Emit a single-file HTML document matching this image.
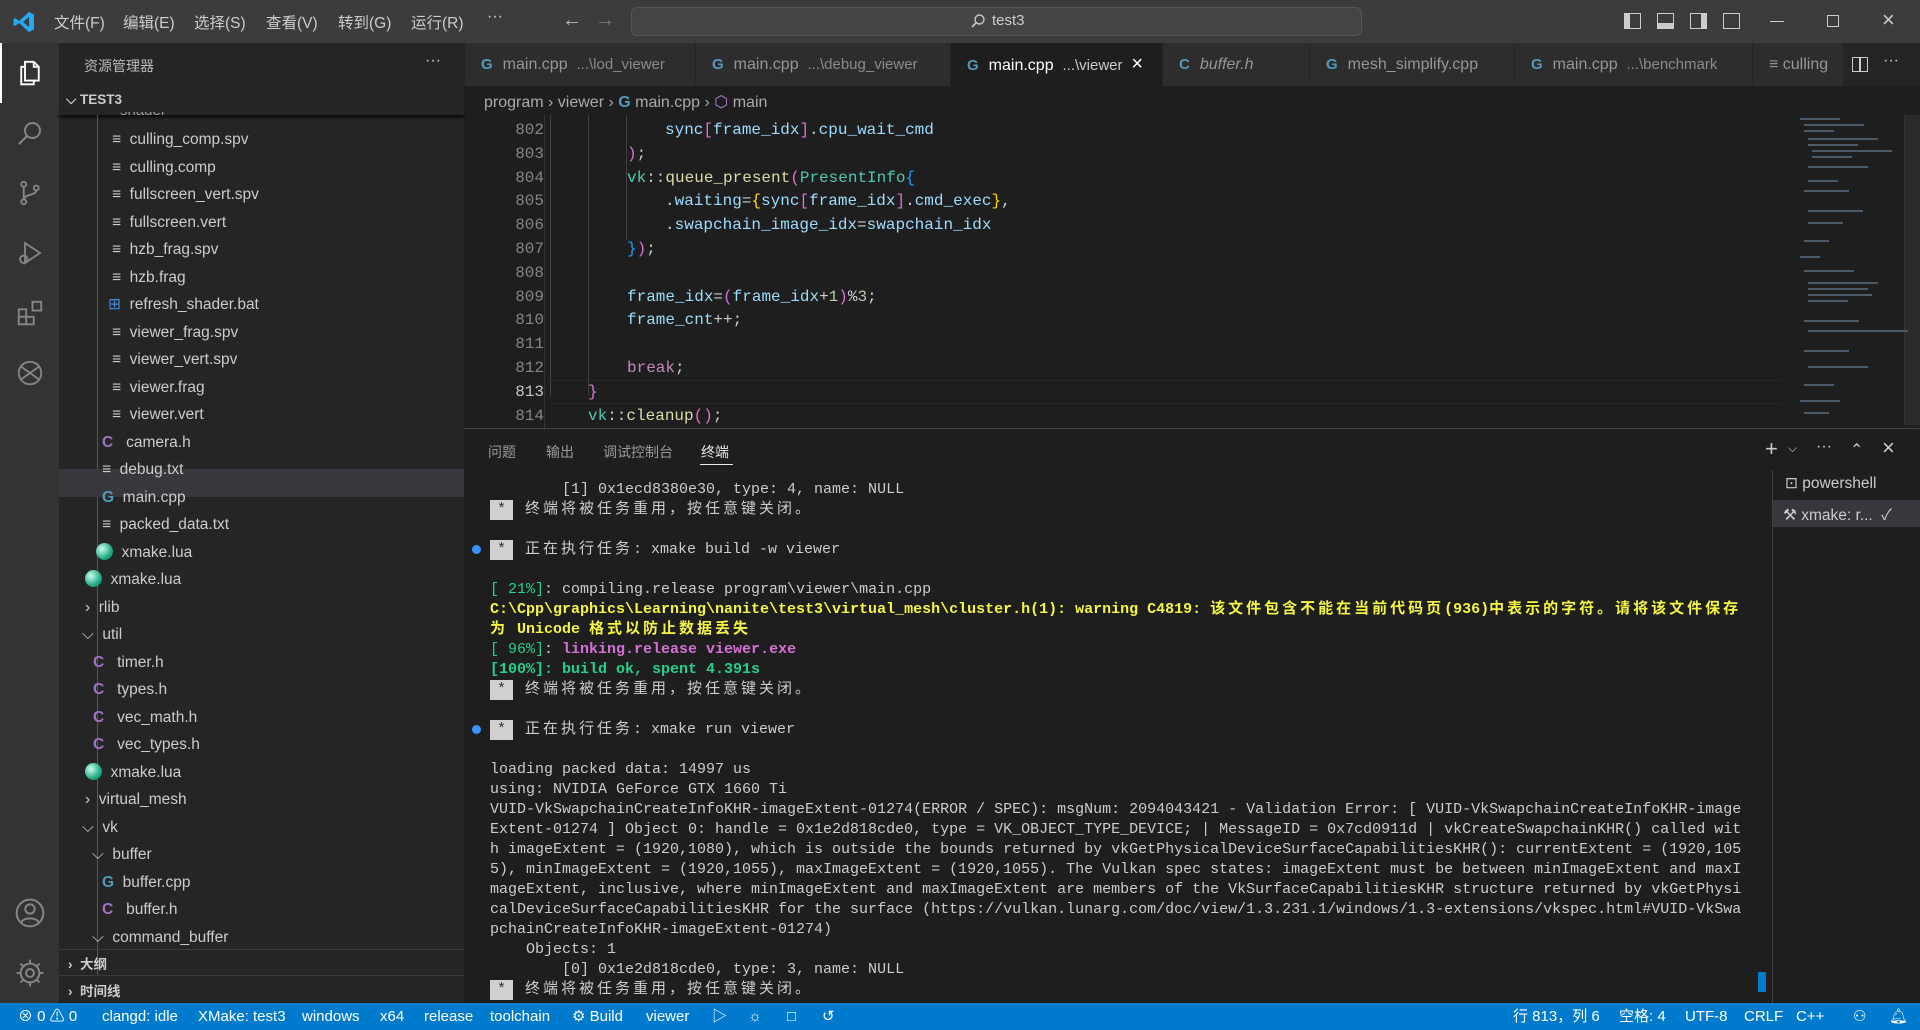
<!DOCTYPE html>
<html><head><meta charset="utf-8"><style>
*{box-sizing:border-box;margin:0;padding:0}
body{width:1920px;height:1030px;background:#1e1e1e;overflow:hidden;position:relative;font-family:"Liberation Sans","Noto Sans CJK SC",sans-serif;color:#cccccc}
.a{position:absolute;white-space:pre}
#title{left:0;top:0;width:1920px;height:43px;background:#3c3c3c}
#act{left:0;top:43px;width:59px;height:960px;background:#333333}
#side{left:59px;top:43px;width:405px;height:960px;background:#252526}
#tabs{left:464px;top:43px;width:1456px;height:43px;background:#252526}
.tab{position:absolute;top:43px;height:43px;background:#2d2d2d;border-right:1px solid #252526;color:#969696;font-size:16px;line-height:43px;padding-left:16px;white-space:pre}
.tab b{color:#519aba;font-weight:bold;margin-right:10px;font-size:15px}
.tab i{font-style:normal;color:#8b8b8b;font-size:15px}
.row{position:absolute;left:59px;width:405px;height:27.5px;line-height:27.5px;font-size:15.5px;color:#cccccc;white-space:pre}
.code{font-family:"Liberation Mono",monospace;font-size:16px;line-height:23.8px}
.ln{position:absolute;left:464px;width:80px;text-align:right;color:#858585}
.t{font-family:"Liberation Mono","Noto Sans CJK SC",monospace;font-size:15px;line-height:20px;color:#cccccc;left:490px}
.cj{letter-spacing:3px}
.box{display:inline-block;width:23px;height:20px;background:#d0d0d0;color:#333;text-align:center;vertical-align:top;margin-right:12px}
.sb{position:absolute;top:1003px;height:27px;line-height:27px;font-size:15px;color:#fff;white-space:pre}
.mm{position:absolute;height:2px;background:#4a5a6a}
</style></head><body>
<div id="title" class="a"></div>
<svg class="a" style="left:12px;top:10px" width="24" height="24" viewBox="0 0 24 24"><path d="M17 2 L22 4.5 V19.5 L17 22 L7 13 L3 16 L1.5 15 V9 L3 8 L7 11 Z M17 7 L11 12 L17 17 Z" fill="#23a9f2"/></svg>
<div class="a" style="left:54px;top:11px;font-size:15.5px;color:#cccccc">文件(F)</div>
<div class="a" style="left:123px;top:11px;font-size:15.5px">编辑(E)</div>
<div class="a" style="left:194px;top:11px;font-size:15.5px">选择(S)</div>
<div class="a" style="left:266px;top:11px;font-size:15.5px">查看(V)</div>
<div class="a" style="left:338px;top:11px;font-size:15.5px">转到(G)</div>
<div class="a" style="left:411px;top:11px;font-size:15.5px">运行(R)</div>
<div class="a" style="left:487px;top:8px;font-size:16px">···</div>
<div class="a" style="left:562px;top:9px;font-size:20px;color:#bbb">←</div>
<div class="a" style="left:595px;top:9px;font-size:20px;color:#777">→</div>
<div class="a" style="left:631px;top:7px;width:731px;height:29px;background:#444445;border:1px solid #555;border-radius:6px"></div>
<svg class="a" style="left:970px;top:13px" width="16" height="16" viewBox="0 0 16 16"><circle cx="9.5" cy="6.5" r="4.5" stroke="#ccc" fill="none" stroke-width="1.4"/><path d="M6.3 9.7 L2 14" stroke="#ccc" stroke-width="1.6"/></svg>
<div class="a" style="left:992px;top:12px;font-size:15px">test3</div>
<div class="a" style="left:1624px;top:13px;width:17px;height:16px;border:1.5px solid #ccc;border-left-width:6px"></div>
<div class="a" style="left:1657px;top:13px;width:17px;height:16px;border:1.5px solid #ccc;border-bottom-width:6px"></div>
<div class="a" style="left:1690px;top:13px;width:17px;height:16px;border:1.5px solid #ccc;border-right-width:6px"></div>
<div class="a" style="left:1723px;top:13px;width:17px;height:16px;border:1.5px solid #ccc"></div>
<div class="a" style="left:1770px;top:21px;width:14px;height:1px;background:#ccc"></div>
<div class="a" style="left:1827px;top:15px;width:12px;height:12px;border:1px solid #ccc"></div>
<div class="a" style="left:1882px;top:7px;font-size:22px;color:#ccc">×</div>

<div id="act" class="a"></div>
<div class="a" style="left:0;top:43px;width:2px;height:60px;background:#fff"></div>
<svg class="a" style="left:15px;top:58px" width="30" height="30" viewBox="0 0 24 24" fill="none" stroke="#fff" stroke-width="1.5"><path d="M8 3h7l4 4v11H8z M15 3v4h4 M8 7H5v14h10v-3"/></svg>
<svg class="a" style="left:15px;top:118px" width="30" height="30" viewBox="0 0 24 24" fill="none" stroke="#858585" stroke-width="1.6"><circle cx="14" cy="10" r="6"/><path d="M9.5 14.5 L3 21"/></svg>
<svg class="a" style="left:15px;top:178px" width="30" height="30" viewBox="0 0 24 24" fill="none" stroke="#858585" stroke-width="1.5"><circle cx="7" cy="5" r="2"/><circle cx="7" cy="19" r="2"/><circle cx="17" cy="8" r="2"/><path d="M7 7v10 M17 10c0 4-10 3-10 7"/></svg>
<svg class="a" style="left:15px;top:238px" width="30" height="30" viewBox="0 0 24 24" fill="none" stroke="#858585" stroke-width="1.5"><path d="M8 4 L20 12 L8 20 Z"/><circle cx="7" cy="17" r="3"/></svg>
<svg class="a" style="left:15px;top:298px" width="30" height="30" viewBox="0 0 24 24" fill="none" stroke="#858585" stroke-width="1.5"><path d="M3 9h6v6H3z M9 15h6v6H9z M3 15h6v6H3z M14 3h7v7h-7z"/></svg>
<svg class="a" style="left:15px;top:358px" width="30" height="30" viewBox="0 0 24 24" fill="none" stroke="#858585" stroke-width="1.5"><circle cx="12" cy="12" r="9"/><path d="M5 7l14 10 M5 17l14-10"/></svg>
<svg class="a" style="left:14px;top:897px" width="32" height="32" viewBox="0 0 24 24" fill="none" stroke="#858585" stroke-width="1.5"><circle cx="12" cy="12" r="10"/><circle cx="12" cy="9" r="3.5"/><path d="M5.5 19c2-4 11-4 13 0"/></svg>
<svg class="a" style="left:14px;top:957px" width="32" height="32" viewBox="0 0 24 24" fill="none" stroke="#858585" stroke-width="1.5"><circle cx="12" cy="12" r="3"/><path d="M12 2v3M12 19v3M2 12h3M19 12h3M4.9 4.9l2.1 2.1M17 17l2.1 2.1M4.9 19.1L7 17M17 7l2.1-2.1"/><circle cx="12" cy="12" r="7"/></svg>

<div id="side" class="a"></div>
<div class="a" style="left:84px;top:56px;font-size:14px;color:#bbbbbb">资源管理器</div>
<div class="a" style="left:425px;top:52px;font-size:16px">···</div>
<div class="a" style="left:66px;top:92px;font-size:13.5px;font-weight:bold;color:#ccc">⌵ TEST3</div>
<div class="a" style="left:120px;top:112px;width:100px;height:8px;overflow:hidden"><div style="font-size:15px;color:#999;margin-top:-10px">shader</div></div>
<div class="a" style="left:59px;top:112px;width:405px;height:3px;box-shadow:0 2px 3px #000"></div>
<div class="a" style="left:97px;top:115px;width:1px;height:860px;background:#585858"></div>
<div class="row" style="top:469px;background:#37373d"></div>
<div class="row" style="top:126px;left:112px">≡  culling_comp.spv</div>
<div class="row" style="top:154px;left:112px">≡  culling.comp</div>
<div class="row" style="top:181px;left:112px">≡  fullscreen_vert.spv</div>
<div class="row" style="top:209px;left:112px">≡  fullscreen.vert</div>
<div class="row" style="top:236px;left:112px">≡  hzb_frag.spv</div>
<div class="row" style="top:264px;left:112px">≡  hzb.frag</div>
<div class="row" style="top:291px;left:108px"><span style="color:#3e8de0">⊞</span>  refresh_shader.bat</div>
<div class="row" style="top:319px;left:112px">≡  viewer_frag.spv</div>
<div class="row" style="top:346px;left:112px">≡  viewer_vert.spv</div>
<div class="row" style="top:374px;left:112px">≡  viewer.frag</div>
<div class="row" style="top:401px;left:112px">≡  viewer.vert</div>
<div class="row" style="top:429px;left:102px"><b style="color:#a074c4">C</b>   camera.h</div>
<div class="row" style="top:456px;left:102px">≡  debug.txt</div>
<div class="row" style="top:484px;left:102px"><b style="color:#519aba">G</b>  main.cpp</div>
<div class="row" style="top:511px;left:102px">≡  packed_data.txt</div>
<div class="row" style="top:539px;left:96px"><span style="display:inline-block;width:17px;height:17px;border-radius:50%;vertical-align:-3px;background:radial-gradient(circle at 35% 35%,#cfe,#2a8 60%,#174)"></span>  xmake.lua</div>
<div class="row" style="top:566px;left:85px"><span style="display:inline-block;width:17px;height:17px;border-radius:50%;vertical-align:-3px;background:radial-gradient(circle at 35% 35%,#cfe,#2a8 60%,#174)"></span>  xmake.lua</div>
<div class="row" style="top:594px;left:85px">›  rlib</div>
<div class="row" style="top:621px;left:82px">⌵  util</div>
<div class="row" style="top:649px;left:93px"><b style="color:#a074c4">C</b>   timer.h</div>
<div class="row" style="top:676px;left:93px"><b style="color:#a074c4">C</b>   types.h</div>
<div class="row" style="top:704px;left:93px"><b style="color:#a074c4">C</b>   vec_math.h</div>
<div class="row" style="top:731px;left:93px"><b style="color:#a074c4">C</b>   vec_types.h</div>
<div class="row" style="top:759px;left:85px"><span style="display:inline-block;width:17px;height:17px;border-radius:50%;vertical-align:-3px;background:radial-gradient(circle at 35% 35%,#cfe,#2a8 60%,#174)"></span>  xmake.lua</div>
<div class="row" style="top:786px;left:85px">›  virtual_mesh</div>
<div class="row" style="top:814px;left:82px">⌵  vk</div>
<div class="row" style="top:841px;left:92px">⌵  buffer</div>
<div class="row" style="top:869px;left:102px"><b style="color:#519aba">G</b>  buffer.cpp</div>
<div class="row" style="top:896px;left:102px"><b style="color:#a074c4">C</b>   buffer.h</div>
<div class="row" style="top:924px;left:92px">⌵  command_buffer</div>
<div class="a" style="left:59px;top:949px;width:405px;height:1px;background:#3c3c3c"></div>
<div class="a" style="left:68px;top:953px;font-size:13.5px;font-weight:bold">›  大纲</div>
<div class="a" style="left:59px;top:975px;width:405px;height:1px;background:#3c3c3c"></div>
<div class="a" style="left:68px;top:980px;font-size:13.5px;font-weight:bold">›  时间线</div>

<div id="tabs" class="a"></div>
<div class="tab" style="left:465px;width:231px"><b>G</b>main.cpp  <i>...\lod_viewer</i></div>
<div class="tab" style="left:696px;width:255px"><b>G</b>main.cpp  <i>...\debug_viewer</i></div>
<div class="tab" style="left:951px;width:212px;background:#1e1e1e;color:#fff"><b>G</b>main.cpp  <i style="color:#ccc">...\viewer</i>  <span style="font-size:20px">×</span></div>
<div class="tab" style="left:1163px;width:147px"><b>C</b><span style="font-style:italic">buffer.h</span></div>
<div class="tab" style="left:1310px;width:205px"><b>G</b>mesh_simplify.cpp</div>
<div class="tab" style="left:1515px;width:238px"><b>G</b>main.cpp  <i>...\benchmark</i></div>
<div class="tab" style="left:1753px;width:100px">≡ culling</div>
<div class="a" style="left:1843px;top:43px;width:77px;height:43px;background:#252526"></div>
<div class="a" style="left:1852px;top:57px;width:16px;height:15px;border:1.5px solid #ccc"></div><div class="a" style="left:1859px;top:57px;width:1.5px;height:15px;background:#ccc"></div>
<div class="a" style="left:1883px;top:52px;font-size:16px">···</div>
<div class="a" style="left:484px;top:92px;font-size:16px;color:#aaa">program › viewer › <b style="color:#519aba">G</b> main.cpp › <span style="color:#b180d7">⬡</span> main</div>

<div class="a" style="left:544px;top:115px;width:1px;height:315px;background:#333"></div>
<div class="a" style="left:550px;top:115px;width:1px;height:280px;background:#404040"></div>
<div class="a" style="left:588px;top:115px;width:1px;height:280px;background:#404040"></div>
<div class="a" style="left:626px;top:115px;width:1px;height:125px;background:#404040"></div>
<div class="a" style="left:550px;top:380px;width:1232px;height:24px;border-top:1px solid #282828;border-bottom:1px solid #282828"></div>
<div class="a code" style="left:0;top:119px;width:1790px">
<div class="ln" style="top:0">802</div><div class="ln" style="top:23.8px">803</div><div class="ln" style="top:47.6px">804</div><div class="ln" style="top:71.4px">805</div><div class="ln" style="top:95.2px">806</div><div class="ln" style="top:119px">807</div><div class="ln" style="top:142.8px">808</div><div class="ln" style="top:166.6px">809</div><div class="ln" style="top:190.4px">810</div><div class="ln" style="top:214.2px">811</div><div class="ln" style="top:238px">812</div><div class="ln" style="top:261.8px;color:#c6c6c6">813</div><div class="ln" style="top:285.6px">814</div>
<div class="a" style="left:665px;top:0"><span style="color:#9cdcfe">sync</span><span style="color:#da70d6">[</span><span style="color:#9cdcfe">frame_idx</span><span style="color:#da70d6">]</span>.<span style="color:#9cdcfe">cpu_wait_cmd</span></div>
<div class="a" style="left:627px;top:23.8px"><span style="color:#da70d6">)</span>;</div>
<div class="a" style="left:627px;top:47.6px"><span style="color:#4ec9b0">vk</span>::<span style="color:#dcdcaa">queue_present</span><span style="color:#da70d6">(</span><span style="color:#4ec9b0">PresentInfo</span><span style="color:#179fff">{</span></div>
<div class="a" style="left:665px;top:71.4px">.<span style="color:#9cdcfe">waiting</span>=<span style="color:#ffd700">{</span><span style="color:#9cdcfe">sync</span><span style="color:#da70d6">[</span><span style="color:#9cdcfe">frame_idx</span><span style="color:#da70d6">]</span>.<span style="color:#9cdcfe">cmd_exec</span><span style="color:#ffd700">}</span>,</div>
<div class="a" style="left:665px;top:95.2px">.<span style="color:#9cdcfe">swapchain_image_idx</span>=<span style="color:#9cdcfe">swapchain_idx</span></div>
<div class="a" style="left:627px;top:119px"><span style="color:#179fff">}</span><span style="color:#da70d6">)</span>;</div>
<div class="a" style="left:627px;top:166.6px"><span style="color:#9cdcfe">frame_idx</span>=<span style="color:#da70d6">(</span><span style="color:#9cdcfe">frame_idx</span>+<span style="color:#b5cea8">1</span><span style="color:#da70d6">)</span>%<span style="color:#b5cea8">3</span>;</div>
<div class="a" style="left:627px;top:190.4px"><span style="color:#9cdcfe">frame_cnt</span>++;</div>
<div class="a" style="left:627px;top:238px"><span style="color:#c586c0">break</span>;</div>
<div class="a" style="left:588px;top:261.8px;color:#da70d6">}</div>
<div class="a" style="left:588px;top:285.6px"><span style="color:#4ec9b0">vk</span>::<span style="color:#dcdcaa">cleanup</span><span style="color:#da70d6">()</span>;</div>
</div>
<div class="a" style="left:1904px;top:115px;width:16px;height:310px;background:#2a2a2a"></div>
<div class="a" style="left:1904px;top:115px;width:1px;height:310px;background:#333"></div>
<div class="mm" style="left:1800px;top:118px;width:40px"></div><div class="mm" style="left:1804px;top:124px;width:60px"></div><div class="mm" style="left:1804px;top:130px;width:30px"></div><div class="mm" style="left:1808px;top:138px;width:70px"></div><div class="mm" style="left:1808px;top:144px;width:50px"></div><div class="mm" style="left:1812px;top:150px;width:80px"></div><div class="mm" style="left:1812px;top:156px;width:40px"></div><div class="mm" style="left:1808px;top:166px;width:60px"></div><div class="mm" style="left:1808px;top:180px;width:30px"></div><div class="mm" style="left:1804px;top:190px;width:45px"></div><div class="mm" style="left:1808px;top:210px;width:55px"></div><div class="mm" style="left:1808px;top:222px;width:35px"></div><div class="mm" style="left:1804px;top:240px;width:25px"></div><div class="mm" style="left:1800px;top:256px;width:20px"></div><div class="mm" style="left:1804px;top:270px;width:50px"></div><div class="mm" style="left:1808px;top:282px;width:70px"></div><div class="mm" style="left:1808px;top:288px;width:60px"></div><div class="mm" style="left:1808px;top:294px;width:64px"></div><div class="mm" style="left:1808px;top:300px;width:40px"></div><div class="mm" style="left:1804px;top:320px;width:55px"></div><div class="mm" style="left:1808px;top:330px;width:100px"></div><div class="mm" style="left:1804px;top:350px;width:45px"></div><div class="mm" style="left:1808px;top:366px;width:60px"></div><div class="mm" style="left:1804px;top:384px;width:30px"></div><div class="mm" style="left:1800px;top:400px;width:40px"></div><div class="mm" style="left:1804px;top:412px;width:25px"></div>

<div class="a" style="left:464px;top:428px;width:1456px;height:1px;background:#414141"></div>
<div class="a" style="left:488px;top:442px;font-size:14px;color:#999">问题</div>
<div class="a" style="left:546px;top:442px;font-size:14px;color:#999">输出</div>
<div class="a" style="left:603px;top:442px;font-size:14px;color:#999">调试控制台</div>
<div class="a" style="left:701px;top:442px;font-size:14px;color:#e7e7e7">终端</div>
<div class="a" style="left:700px;top:464px;width:33px;height:1px;background:#e7e7e7"></div>
<div class="a" style="left:1765px;top:436px;font-size:22px;color:#ccc">+</div>
<div class="a" style="left:1788px;top:441px;font-size:12px;color:#ccc">⌵</div>
<div class="a" style="left:1816px;top:438px;font-size:16px">···</div>
<div class="a" style="left:1850px;top:440px;font-size:16px">⌃</div>
<div class="a" style="left:1882px;top:435px;font-size:22px">×</div>
<div class="a" style="left:1772px;top:470px;width:1px;height:533px;background:#414141"></div>
<div class="a" style="left:1773px;top:500px;width:147px;height:27px;background:#37373d"></div>
<div class="a" style="left:1785px;top:474px;font-size:15.5px">⊡ powershell</div>
<div class="a" style="left:1783px;top:503px;font-size:15.5px">⚒ xmake: r...  ✓</div>

<div class="a t" style="top:480px">        [1] 0x1ecd8380e30, type: 4, name: NULL</div>
<div class="a t" style="top:500px"><span class="box">*</span><span class="cj">终端将被任务重用，按任意键关闭。</span></div>
<div class="a" style="left:472px;top:545px;width:9px;height:9px;border-radius:50%;background:#3794ff"></div>
<div class="a t" style="top:540px"><span class="box">*</span><span class="cj">正在执行任务</span>: xmake build -w viewer</div>
<div class="a t" style="top:580px"><span style="color:#23d18b">[ 21%]</span>: compiling.release program\viewer\main.cpp</div>
<div class="a t" style="top:600px;color:#f5f543;font-weight:bold">C:\Cpp\graphics\Learning\nanite\test3\virtual_mesh\cluster.h(1): warning C4819: <span class="cj">该文件包含不能在当前代码页</span>(936)<span class="cj">中表示的字符。请将该文件保存</span></div>
<div class="a t" style="top:620px;color:#f5f543;font-weight:bold"><span class="cj">为</span> Unicode <span class="cj">格式以防止数据丢失</span></div>
<div class="a t" style="top:640px"><span style="color:#23d18b">[ 96%]</span>: <span style="color:#d670d6;font-weight:bold">linking.release viewer.exe</span></div>
<div class="a t" style="top:660px;color:#23d18b;font-weight:bold">[100%]: build ok, spent 4.391s</div>
<div class="a t" style="top:680px"><span class="box">*</span><span class="cj">终端将被任务重用，按任意键关闭。</span></div>
<div class="a" style="left:472px;top:725px;width:9px;height:9px;border-radius:50%;background:#3794ff"></div>
<div class="a t" style="top:720px"><span class="box">*</span><span class="cj">正在执行任务</span>: xmake run viewer</div>
<div class="a t" style="top:760px">loading packed data: 14997 us</div>
<div class="a t" style="top:780px">using: NVIDIA GeForce GTX 1660 Ti</div>
<div class="a t" style="top:800px">VUID-VkSwapchainCreateInfoKHR-imageExtent-01274(ERROR / SPEC): msgNum: 2094043421 - Validation Error: [ VUID-VkSwapchainCreateInfoKHR-image
Extent-01274 ] Object 0: handle = 0x1e2d818cde0, type = VK_OBJECT_TYPE_DEVICE; | MessageID = 0x7cd0911d | vkCreateSwapchainKHR() called wit
h imageExtent = (1920,1080), which is outside the bounds returned by vkGetPhysicalDeviceSurfaceCapabilitiesKHR(): currentExtent = (1920,105
5), minImageExtent = (1920,1055), maxImageExtent = (1920,1055). The Vulkan spec states: imageExtent must be between minImageExtent and maxI
mageExtent, inclusive, where minImageExtent and maxImageExtent are members of the VkSurfaceCapabilitiesKHR structure returned by vkGetPhysi
calDeviceSurfaceCapabilitiesKHR for the surface (https://vulkan.lunarg.com/doc/view/1.3.231.1/windows/1.3-extensions/vkspec.html#VUID-VkSwa
pchainCreateInfoKHR-imageExtent-01274)
    Objects: 1
        [0] 0x1e2d818cde0, type: 3, name: NULL</div>
<div class="a t" style="top:980px"><span class="box">*</span><span class="cj">终端将被任务重用，按任意键关闭。</span></div>
<div class="a" style="left:1758px;top:972px;width:8px;height:20px;background:#007acc"></div>

<div class="a" style="left:0;top:1003px;width:1920px;height:27px;background:#007acc"></div>
<div class="sb" style="left:18px">⊗ 0 ⚠ 0</div>
<div class="sb" style="left:102px">clangd: idle</div>
<div class="sb" style="left:198px">XMake: test3</div>
<div class="sb" style="left:302px">windows</div>
<div class="sb" style="left:380px">x64</div>
<div class="sb" style="left:424px">release</div>
<div class="sb" style="left:490px">toolchain</div>
<div class="sb" style="left:572px">⚙ Build</div>
<div class="sb" style="left:646px">viewer</div>
<div class="sb" style="left:712px">▷</div>
<div class="sb" style="left:748px">☼</div>
<div class="sb" style="left:787px">□</div>
<div class="sb" style="left:822px">↺</div>
<div class="sb" style="left:1513px">行 813，列 6</div>
<div class="sb" style="left:1619px">空格: 4</div>
<div class="sb" style="left:1685px">UTF-8</div>
<div class="sb" style="left:1744px">CRLF</div>
<div class="sb" style="left:1796px">C++</div>
<div class="sb" style="left:1853px">⚇</div>
<div class="sb" style="left:1889px">🔔︎</div>
</body></html>
